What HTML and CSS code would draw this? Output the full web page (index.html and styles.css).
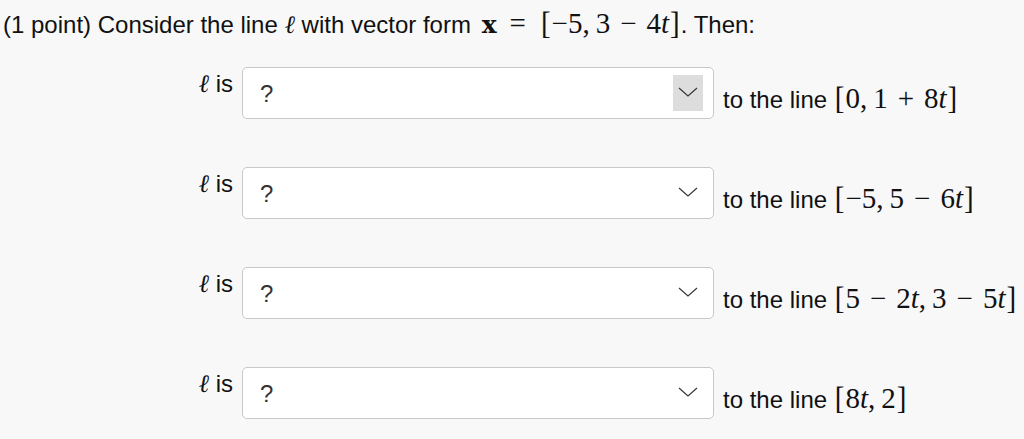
FILE: index.html
```html
<!DOCTYPE html>
<html>
<head>
<meta charset="utf-8">
<link rel="stylesheet" href="styles.css">
</head>
<body>
<div class="page">
  <p class="intro">(1 point) Consider the line <span class="ell">ℓ</span> with vector form <span class="math lead"><b class="bx">x</b><span class="eq">=</span><span class="br">[</span>−5,<span class="sp"></span>3<span class="op">−</span>4<i>t</i><span class="br">]</span></span>. Then:</p>

  <div class="row">
    <span class="label"><span class="ell">ℓ</span> is</span>
    <div class="select">
      <span class="value">?</span>
      <span class="chev hover"><svg width="30" height="36" viewBox="0 0 30 36"><path d="M6 13 L15 21 L24 13" fill="none" stroke="#333" stroke-width="1.1"/></svg></span>
    </div>
    <span class="after">to the line <span class="math"><span class="br">[</span>0,<span class="sp"></span>1<span class="op">+</span>8<i>t</i><span class="br">]</span></span></span>
  </div>

  <div class="row">
    <span class="label"><span class="ell">ℓ</span> is</span>
    <div class="select">
      <span class="value">?</span>
      <span class="chev"><svg width="30" height="36" viewBox="0 0 30 36"><path d="M6 13 L15 21 L24 13" fill="none" stroke="#333" stroke-width="1.1"/></svg></span>
    </div>
    <span class="after">to the line <span class="math"><span class="br">[</span>−5,<span class="sp"></span>5<span class="op">−</span>6<i>t</i><span class="br">]</span></span></span>
  </div>

  <div class="row">
    <span class="label"><span class="ell">ℓ</span> is</span>
    <div class="select">
      <span class="value">?</span>
      <span class="chev"><svg width="30" height="36" viewBox="0 0 30 36"><path d="M6 13 L15 21 L24 13" fill="none" stroke="#333" stroke-width="1.1"/></svg></span>
    </div>
    <span class="after">to the line <span class="math"><span class="br">[</span>5<span class="op">−</span>2<i>t</i>,<span class="sp"></span>3<span class="op">−</span>5<i>t</i><span class="br">]</span></span></span>
  </div>

  <div class="row">
    <span class="label"><span class="ell">ℓ</span> is</span>
    <div class="select">
      <span class="value">?</span>
      <span class="chev"><svg width="30" height="36" viewBox="0 0 30 36"><path d="M6 13 L15 21 L24 13" fill="none" stroke="#333" stroke-width="1.1"/></svg></span>
    </div>
    <span class="after">to the line <span class="math"><span class="br">[</span>8<i>t</i>,<span class="sp"></span>2<span class="br">]</span></span></span>
  </div>
</div>
</body>
</html>
```

FILE: styles.css
```css
html, body {
  margin: 0;
  padding: 0;
  background: #f8f8f8;
}
.page {
  font-family: "Liberation Sans", Arial, sans-serif;
  font-size: 24px;
  color: #111;
  padding: 10px 0 0 3px;
}
.intro {
  margin: 0;
  line-height: 27px;
  height: 27px;
  white-space: nowrap;
}
.ell {
  font-family: "DejaVu Serif", serif;
  font-style: italic;
  font-size: 25px;
}
.math {
  font-family: "Liberation Serif", "Times New Roman", serif;
  font-size: 29px;
  color: #111;
}
.math.lead {
  margin-left: 4px;
}
.math i {
  font-style: italic;
}
.math .bx {
  font-family: "DejaVu Serif", serif;
  font-size: 25px;
  font-weight: bold;
}
.math .op {
  padding: 0 10px;
}
.math .eq {
  padding: 0 14px 0 13px;
}
.math .sp {
  display: inline-block;
  width: 6px;
}
.math .br {
  display: inline-block;
  transform: scaleY(1.08);
  margin: 0 1px;
}
.row {
  display: flex;
  align-items: flex-start;
  margin-top: 30px;
  padding-left: 184px;
}
.row + .row {
  margin-top: 48px;
}
.label {
  box-sizing: border-box;
  flex: 0 0 55px;
  min-width: 0;
  padding-right: 9px;
  text-align: right;
  margin-top: 3px;
  line-height: 27px;
  white-space: nowrap;
}
.select {
  box-sizing: border-box;
  flex: 0 0 472px;
  height: 52px;
  background: #fff;
  border: 1px solid #c8c8c8;
  border-radius: 5px;
  display: flex;
  align-items: flex-start;
  justify-content: space-between;
}
.value {
  padding: 12px 0 0 17px;
  line-height: 27px;
  color: #333;
}
.chev {
  display: block;
  width: 30px;
  height: 36px;
  margin: 7px 10px 0 0;
}
.chev svg {
  display: block;
}
.chev.hover {
  background: #dddddd;
}
.after {
  margin-left: 9px;
  margin-top: 18px;
  line-height: 27px;
  white-space: nowrap;
}
```
